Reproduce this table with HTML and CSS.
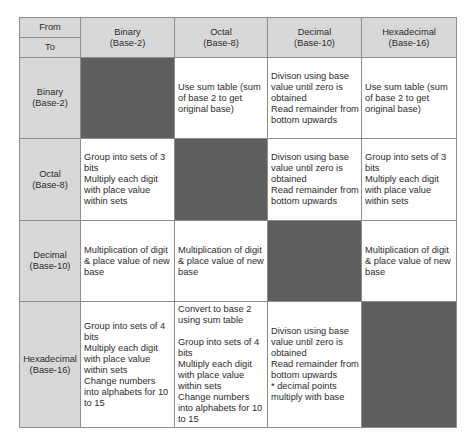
FILE: index.html
```html
<!DOCTYPE html>
<html>
<head>
<meta charset="utf-8">
<link rel="stylesheet" href="styles.css">
</head>
<body>
<table class="conv">
  <colgroup>
    <col class="c-head"><col class="c-a"><col class="c-b"><col class="c-c"><col class="c-d">
  </colgroup>
  <tr class="r-from">
    <th class="corner">From</th>
    <th class="colhead" rowspan="2">Binary<br>(Base-2)</th>
    <th class="colhead" rowspan="2">Octal<br>(Base-8)</th>
    <th class="colhead" rowspan="2">Decimal<br>(Base-10)</th>
    <th class="colhead" rowspan="2">Hexadecimal<br>(Base-16)</th>
  </tr>
  <tr class="r-to">
    <th class="corner">To</th>
  </tr>
  <tr class="r1">
    <th class="rowhead">Binary<br>(Base-2)</th>
    <td class="dark"></td>
    <td>Use sum table (sum<br>of base 2 to get<br>original base)</td>
    <td>Divison using base<br>value until zero is<br>obtained<br>Read remainder from<br>bottom upwards</td>
    <td>Use sum table (sum<br>of base 2 to get<br>original base)</td>
  </tr>
  <tr class="r2">
    <th class="rowhead">Octal<br>(Base-8)</th>
    <td>Group into sets of 3<br>bits<br>Multiply each digit<br>with place value<br>within sets</td>
    <td class="dark"></td>
    <td>Divison using base<br>value until zero is<br>obtained<br>Read remainder from<br>bottom upwards</td>
    <td>Group into sets of 3<br>bits<br>Multiply each digit<br>with place value<br>within sets</td>
  </tr>
  <tr class="r3">
    <th class="rowhead">Decimal<br>(Base-10)</th>
    <td>Multiplication of digit<br>&amp; place value of new<br>base</td>
    <td>Multiplication of digit<br>&amp; place value of new<br>base</td>
    <td class="dark"></td>
    <td>Multiplication of digit<br>&amp; place value of new<br>base</td>
  </tr>
  <tr class="r4">
    <th class="rowhead">Hexadecimal<br>(Base-16)</th>
    <td>Group into sets of 4<br>bits<br>Multiply each digit<br>with place value<br>within sets<br>Change numbers<br>into alphabets for 10<br>to 15</td>
    <td>Convert to base 2<br>using sum table<br><br>Group into sets of 4<br>bits<br>Multiply each digit<br>with place value<br>within sets<br>Change numbers<br>into alphabets for 10<br>to 15</td>
    <td>Divison using base<br>value until zero is<br>obtained<br>Read remainder from<br>bottom upwards<br>* decimal points<br>multiply with base</td>
    <td class="dark"></td>
  </tr>
</table>
</body>
</html>
```
FILE: styles.css
```css
html, body {
  margin: 0;
  padding: 0;
  background: #ffffff;
}

body {
  font-family: "Liberation Sans", Arial, Helvetica, sans-serif;
  font-size: 9.3px;
  line-height: 11px;
  color: #2b2b2b;
}

.conv {
  margin: 17px 0 0 19px;
  border-collapse: collapse;
  table-layout: fixed;
  width: 437px;
}

.c-head { width: 61px; }
.c-a { width: 94px; }
.c-b { width: 93px; }
.c-c { width: 94px; }
.c-d { width: 95px; }

.conv th,
.conv td {
  border: 1px solid #8e8e8e;
  padding: 0 3px;
  vertical-align: middle;
  white-space: nowrap;
  overflow: hidden;
}

.conv th {
  font-weight: normal;
  text-align: center;
  background: #d8d8d8;
}

.conv td {
  text-align: left;
  background: #ffffff;
}

.conv td.dark {
  background: #5f5f5f;
}

.r-from, .r-to { height: 20px; }
.r1 { height: 81px; }
.r2 { height: 82px; }
.r3 { height: 81px; }
.r4 { height: 126px; }
```
